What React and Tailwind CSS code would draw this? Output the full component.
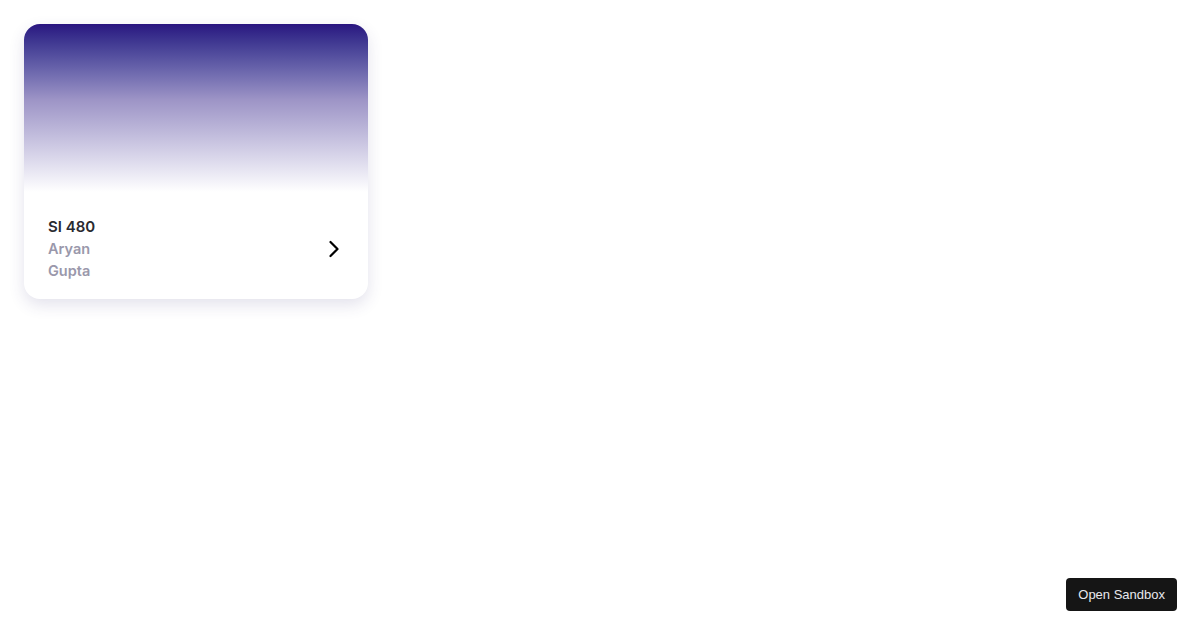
import { ChevronRight } from 'lucide-react'

export default function App() {
  return (
    <div className="min-h-screen bg-white p-6" style={{ fontFamily: 'Inter, "Noto Sans", sans-serif' }}>
      <div className="w-[344px] rounded-2xl bg-white overflow-hidden shadow-[0_6px_16px_rgba(60,50,120,0.14)]">
        <div className="h-[168px] bg-gradient-to-b from-[#2a1480] via-[#9d94c6] via-45% to-white" />
        <div className="flex items-center justify-between pl-6 pr-5 pt-6 pb-[17px]">
          <div className="flex flex-col text-[14.5px] leading-[22px]">
            <span className="font-semibold text-[#2a2a30] text-[15px]">SI 480</span>
            <span className="font-semibold text-[#9a98ab]">Aryan</span>
            <span className="font-semibold text-[#9a98ab]">Gupta</span>
          </div>
          <ChevronRight className="w-7 h-7 text-black" strokeWidth={1.9} />
        </div>
      </div>
      <button
        className="fixed right-[23px] bottom-[19px] h-[33px] px-[12px] rounded bg-[#151515] text-[13px] text-[#e8e8ee]"
        style={{ fontFamily: '"Liberation Sans", Arial, sans-serif' }}
      >
        Open Sandbox
      </button>
    </div>
  )
}
